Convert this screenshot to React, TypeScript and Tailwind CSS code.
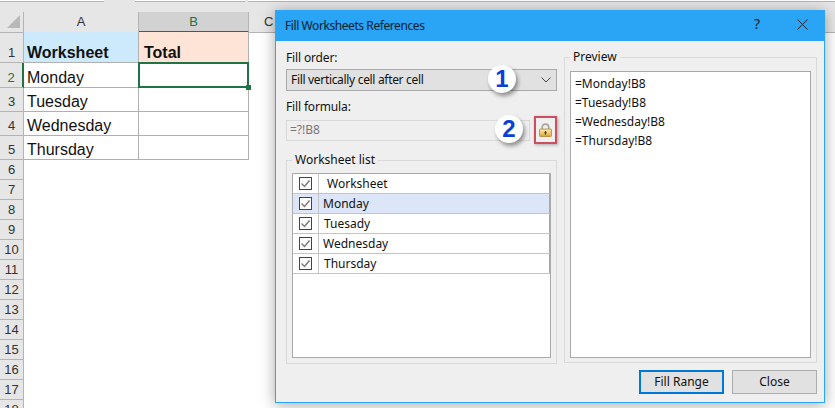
const rowHead = "flex items-end justify-center border-r border-b border-[#b4b4b4] bg-[#e6e6e6] text-[13px] leading-[19px] text-[#333] [font-family:'Liberation_Sans',sans-serif]";
const cell = "border-r border-b border-[#b0b0b0] px-[3px] flex items-end text-[16px] leading-[18px] text-[#111] [font-family:'Liberation_Sans',sans-serif]";
const ui = "[font-family:'Noto_Sans',sans-serif]";

function Check() {
  return (
    <svg width="13" height="13" viewBox="0 0 13 13" className="block">
      <rect x="0.5" y="0.5" width="12" height="12" fill="#fff" stroke="#444" />
      <path d="M2.5 6.5 L5.5 9.5 L10.5 3.5" fill="none" stroke="#777" strokeWidth="1.4" />
    </svg>
  );
}

function Callout({ n, className }: { n: string; className: string }) {
  return (
    <div className={"absolute flex h-[28px] w-[28px] items-center justify-center rounded-full bg-white pb-[1px] shadow-[2px_3px_4px_rgba(0,0,0,0.4)] text-[24px] font-bold leading-none text-[#0b3fd6] [font-family:'Liberation_Sans',sans-serif] " + className}>
      {n}
    </div>
  );
}

function Lock() {
  return (
    <svg width="13" height="14" viewBox="0 0 14 15">
      <defs>
        <linearGradient id="lockBody" x1="0" y1="0" x2="0" y2="1">
          <stop offset="0" stopColor="#fbeab4" />
          <stop offset="0.5" stopColor="#f0cb74" />
          <stop offset="1" stopColor="#d6a044" />
        </linearGradient>
      </defs>
      <path d="M3.5 7 V4.5 C3.5 2.4 5 1.2 7 1.2 C9 1.2 10.5 2.4 10.5 4.5 V7" fill="none" stroke="#a8a498" strokeWidth="1.7" />
      <rect x="0.5" y="6.5" width="13" height="8" rx="1" fill="url(#lockBody)" stroke="#b89040" />
      <path d="M7 8.5 V12.5 M5.5 10.5 H8.5" stroke="#5e4310" strokeWidth="1.2" />
    </svg>
  );
}

const list = [
  { t: "Worksheet", pad: "pl-[8px]", bg: "bg-white" },
  { t: "Monday", pad: "pl-[4px]", bg: "bg-[#dce6f8]" },
  { t: "Tuesady", pad: "pl-[5px]", bg: "bg-white" },
  { t: "Wednesday", pad: "pl-[4px]", bg: "bg-white" },
  { t: "Thursday", pad: "pl-[5px]", bg: "bg-white" },
];

const preview = ["=Monday!B8", "=Tuesady!B8", "=Wednesday!B8", "=Thursday!B8"];
const lowerRows = ["6", "7", "8", "9", "10", "11", "12", "13", "14", "15", "16", "17", "18"];

export default function App() {
  return (
    <div className="relative h-[408px] w-[835px] overflow-hidden bg-white">
      {/* ribbon strip */}
      <div className="flex h-[12px] items-start gap-[31px] bg-[#e6e6e6]">
        <div className="h-[2px] w-[104px] border-b border-[#b4b4b4] bg-white" />
        <div className="h-[2px] w-[110px] border-b border-[#b4b4b4] bg-white" />
        <div className="-ml-[28px] h-[2px] flex-1 border-b border-[#b4b4b4] bg-white" />
      </div>

      {/* column headers */}
      <div className="grid h-[20px] grid-cols-[24px_115px_110px_1fr] bg-[#e6e6e6] text-[13px] leading-[19px] [font-family:'Liberation_Sans',sans-serif]">
        <div className="relative border-r border-b border-[#b4b4b4]">
          <svg width="13" height="13" className="absolute bottom-[4px] right-[3px]"><path d="M13 0 V13 H0 Z" fill="#b8b8b8" /></svg>
        </div>
        <div className="border-r border-b border-[#b4b4b4] text-center text-[#333]">A</div>
        <div className="border-r border-b-2 border-r-[#b4b4b4] border-b-[#217346] bg-[#d2d2d2] text-center text-[#217346]">B</div>
        <div className="border-b border-[#b4b4b4] pl-[15px] text-[#333]">C</div>
      </div>

      {/* worksheet rows */}
      <div className="grid grid-cols-[24px_115px_110px] [grid-template-rows:31px_25px_24px_24px_24px]">
        <div className={rowHead}>1</div>
        <div className={cell + " bg-[#cdeafd] font-bold"}>Worksheet</div>
        <div className={cell + " bg-[#fde4d6] pl-[5px] font-bold"}>Total</div>

        <div className={rowHead + " border-r-2 border-r-[#217346] bg-[#d2d2d2] text-[#217346]"}>2</div>
        <div className={cell}>Monday</div>
        <div className={cell + " relative"}>
          <div className="absolute -top-px -left-px -right-px -bottom-px border-2 border-[#217346]" />
          <div className="absolute -right-[3px] -bottom-[3px] h-[5px] w-[5px] bg-[#217346]" />
        </div>

        <div className={rowHead}>3</div>
        <div className={cell}>Tuesday</div>
        <div className={cell} />

        <div className={rowHead}>4</div>
        <div className={cell}>Wednesday</div>
        <div className={cell} />

        <div className={rowHead}>5</div>
        <div className={cell}>Thursday</div>
        <div className={cell} />
      </div>
      <div className="flex w-[24px] flex-col">
        {lowerRows.map((r) => (
          <div key={r} className={rowHead + " h-[20px] shrink-0"}>{r}</div>
        ))}
      </div>

      {/* dialog */}
      <div className={"absolute left-[275px] top-[10px] flex h-[393px] w-[550px] flex-col border-x border-b border-[#2aa4f4] bg-[#efefef] shadow-[0_2px_14px_rgba(0,0,0,0.35)] text-[12px] leading-[16px] text-[#111] " + ui}>
        <div className="flex h-[31px] shrink-0 items-center justify-between bg-[#2aa4f4] pl-[9px] pr-[16px] text-[#10202e]">
          <span className="text-[12px] tracking-[-0.42px]">Fill Worksheets References</span>
          <div className="flex items-center gap-[37px]">
            <span className="-mt-[3px] text-[14px]">?</span>
            <svg width="11" height="11" viewBox="0 0 11 11" className="-mt-[2px]"><path d="M0.5 0.5 L10.5 10.5 M10.5 0.5 L0.5 10.5" stroke="#10202e" fill="none" /></svg>
          </div>
        </div>

        <div className="flex flex-1 gap-[7px] pl-[10px] pr-[7px]">
          {/* left column */}
          <div className="flex w-[271px] shrink-0 flex-col pt-[9px]">
            <div className="h-[19px] tracking-[-0.15px]">Fill order:</div>
            <div className="flex h-[22px] items-center justify-between border border-[#a9a9a9] bg-[#e1e1e1] pl-[4px] pr-[5px]">
              <span className="tracking-[-0.32px]">Fill vertically cell after cell</span>
              <svg width="10" height="6" viewBox="0 0 10 6"><path d="M0.5 0.5 L5 5 L9.5 0.5" fill="none" stroke="#444" /></svg>
            </div>
            <div className="mt-[9px] h-[14px] leading-[14px] tracking-[-0.15px]">Fill formula:</div>
            <div className="mt-[2px] flex items-center">
              <div className="flex h-[21px] w-[245px] items-center border border-[#d9d9d9] bg-[#efefef] pl-[3px] text-[#777]">=?!B8</div>
              <div className="ml-[4px] flex h-[28px] w-[23px] items-center justify-center border-2 border-[#c9505e] shadow-[1px_1px_3px_rgba(0,0,0,0.3)]">
                <Lock />
              </div>
            </div>
            <div className="relative mt-[16px] h-[204px] border border-[#d9d9d9] px-[5px] pt-[12px]">
              <span className="absolute -top-[9px] left-[5px] bg-[#efefef] px-[3px]">Worksheet list</span>
              <div className="h-[185px] border border-[#a9a9a9] bg-white">
                {list.map((row) => (
                  <div key={row.t} className={"flex h-[20px] border-b border-[#c4c4c4] " + row.bg}>
                    <div className="flex w-[26px] shrink-0 items-center justify-center border-r border-[#c4c4c4]"><Check /></div>
                    <div className={"flex items-center " + row.pad}>{row.t}</div>
                    <div className="flex-1 border-r border-[#a9a9a9]" />
                  </div>
                ))}
              </div>
            </div>
          </div>

          {/* right column */}
          <div className="relative mt-[16px] h-[306px] w-[253px] shrink-0 border border-[#d9d9d9] px-[5px] pt-[13px]">
            <span className="absolute -top-[9px] left-[5px] bg-[#efefef] px-[3px]">Preview</span>
            <div className="h-[287px] border border-[#a9a9a9] bg-white pl-[4px] pt-[2px] leading-[19px]">
              {preview.map((p) => (
                <div key={p}>{p}</div>
              ))}
            </div>
          </div>
        </div>

        <div className="flex h-[33px] shrink-0 justify-end gap-[8px] pt-[1px] pr-[7px]">
          <button className="h-[24px] w-[85px] border-2 border-[#0078d7] bg-[#e1e1e1]">Fill Range</button>
          <button className="h-[24px] w-[85px] border border-[#adadad] bg-[#e1e1e1]">Close</button>
        </div>

        <Callout n="1" className="left-[212px] top-[55px]" />
        <Callout n="2" className="left-[219px] top-[105px]" />
      </div>
    </div>
  );
}
